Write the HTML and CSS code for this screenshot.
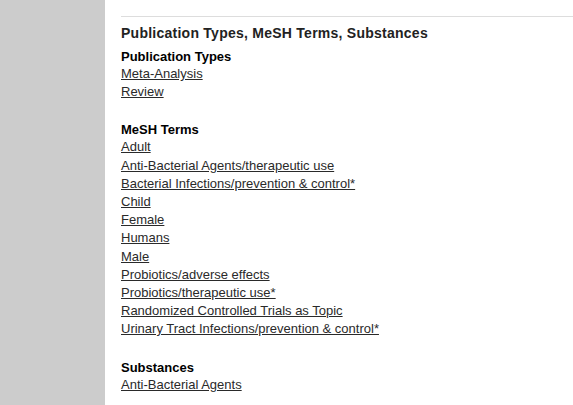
FILE: index.html
```html
<!DOCTYPE html>
<html lang="en">
<head>
    <meta charset="UTF-8">
    <title>Publication Types, MeSH Terms, Substances</title>
    <link rel="stylesheet" href="styles.css">
</head>
<body>
    <div class="page">
        <div class="sidebar"></div>

        <div class="content">
            <div class="section">
                <h3 class="section-title">Publication Types, MeSH Terms, Substances</h3>

                <h4 class="group-title">Publication Types</h4>
                <ul class="term-list">
                    <li><a href="#">Meta-Analysis</a></li>
                    <li><a href="#">Review</a></li>
                </ul>

                <h4 class="group-title">MeSH Terms</h4>
                <ul class="term-list">
                    <li><a href="#">Adult</a></li>
                    <li><a href="#">Anti-Bacterial Agents/therapeutic use</a></li>
                    <li><a href="#">Bacterial Infections/prevention &amp; control*</a></li>
                    <li><a href="#">Child</a></li>
                    <li><a href="#">Female</a></li>
                    <li><a href="#">Humans</a></li>
                    <li><a href="#">Male</a></li>
                    <li><a href="#">Probiotics/adverse effects</a></li>
                    <li><a href="#">Probiotics/therapeutic use*</a></li>
                    <li><a href="#">Randomized Controlled Trials as Topic</a></li>
                    <li><a href="#">Urinary Tract Infections/prevention &amp; control*</a></li>
                </ul>

                <h4 class="group-title">Substances</h4>
                <ul class="term-list">
                    <li><a href="#">Anti-Bacterial Agents</a></li>
                </ul>
            </div>
        </div>
    </div>
</body>
</html>
```

FILE: styles.css
```css
body {
    margin: 0;
    padding: 0;
    font-family: 'Liberation Sans', Arial, sans-serif;
    background-color: #fff;
}

.page {
    display: flex;
    min-height: 100vh;
}

.sidebar {
    width: 105px;
    flex-shrink: 0;
    background-color: #cccccc;
}

.content {
    flex: 1;
    padding: 16px 0 0 16px;
}

.section {
    border-top: 1px solid #dddddd;
    padding-top: 7px;
}

.section-title {
    margin: 0 0 7px 0;
    font-size: 14px;
    line-height: 18px;
    font-weight: bold;
    letter-spacing: 0.25px;
    color: #222;
}

.group-title {
    margin: 0;
    font-size: 13px;
    line-height: 16px;
    font-weight: bold;
    color: #000;
}

.term-list {
    list-style: none;
    margin: 0 0 21px 0;
    padding: 0;
}

.term-list li {
    font-size: 13px;
    line-height: 18.2px;
}

.term-list a {
    color: #2a2a2a;
    text-decoration: underline;
}
```
